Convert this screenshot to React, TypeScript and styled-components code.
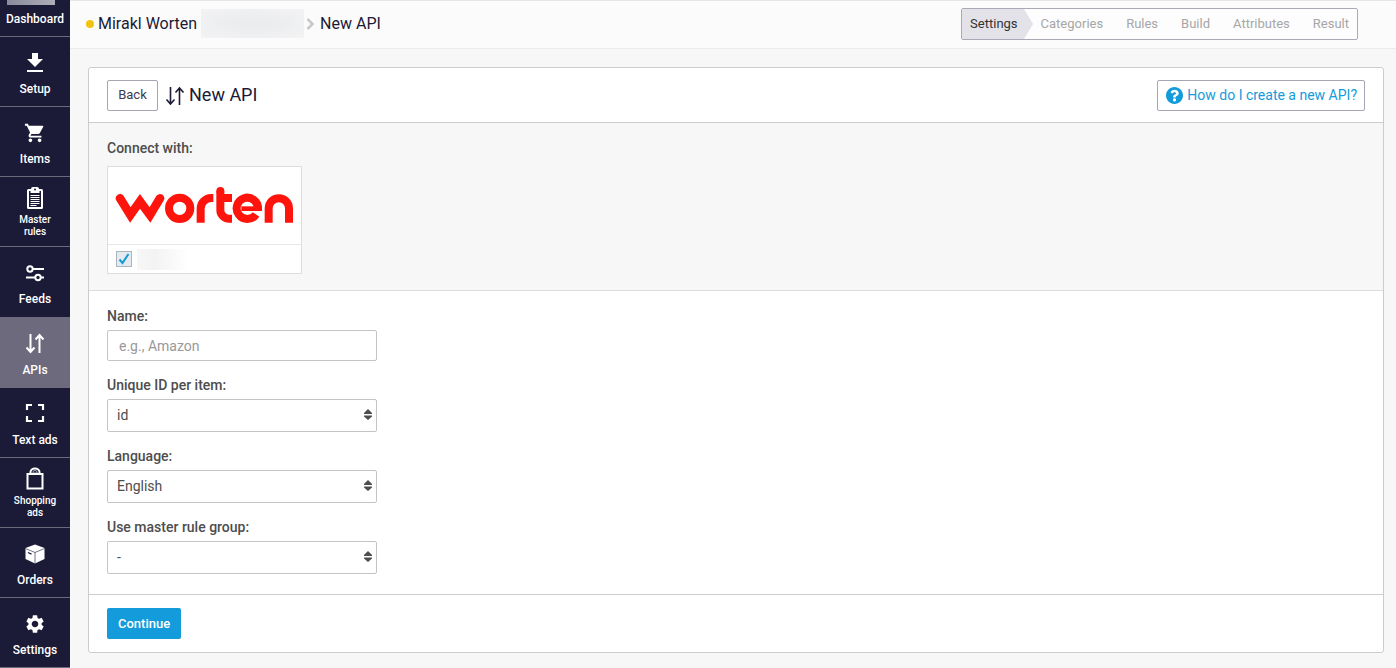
import React from "react";
import styled, { createGlobalStyle, css } from "styled-components";
import { MdShoppingCart, MdSettings } from "react-icons/md";

const GlobalStyle = createGlobalStyle`
  * { box-sizing: border-box; }
  body {
    margin: 0;
    background: #f7f7f7;
    color: #4d4d4d;
    font-family: Roboto, "Liberation Sans", sans-serif;
    font-size: 14px;
  }
  button, input, select { font-family: inherit; }
`;

const navy = "#1b1a37";
const blue = "#139bdb";

const Page = styled.div`
  display: flex;
  align-items: stretch;
  min-height: 100vh;
`;

const Sidebar = styled.nav`
  width: 70px;
  flex: none;
  background: ${navy};
`;

const NavItem = styled.a<{ $active?: boolean; $small?: boolean; $tall?: boolean }>`
  display: flex;
  flex-direction: column;
  align-items: center;
  gap: ${(p) => (p.$small ? 4 : 7)}px;
  height: ${(p) => (p.$tall ? 71 : 70)}px;
  padding-top: ${(p) => (p.$small ? 9 : 15)}px;
  border-bottom: 1px solid #6c6a7c;
  background: ${(p) => (p.$active ? "#6c6a7c" : "transparent")};
  color: #fff;
  font-size: ${(p) => (p.$small ? 10 : 12)}px;
  line-height: ${(p) => (p.$small ? 12 : 16)}px;
  font-weight: 500;
  text-align: center;
  text-decoration: none;
  svg { display: block; }
`;

const NavItemCut = styled(NavItem)`
  height: 37px;
  padding-top: 0;
  gap: 6px;
`;

const DashboardTile = styled.span`
  align-self: flex-start;
  width: 48px;
  height: 5px;
  margin-left: 7px;
  background: linear-gradient(90deg, #8b8a9b, #aeadb8);
`;

const Main = styled.div`
  flex: 1;
  min-width: 0;
`;

const TopBar = styled.header`
  display: flex;
  align-items: center;
  justify-content: space-between;
  height: 49px;
  padding: 0 38px 2px 16px;
  border-top: 1px solid #e6e6e6;
  border-bottom: 1px solid #ebebeb;
  background: #fbfbfb;
`;

const Crumbs = styled.div`
  display: flex;
  align-items: center;
  color: ${navy};
  font-size: 16px;
  line-height: 20px;
`;

const StatusDot = styled.span`
  width: 8px;
  height: 8px;
  margin-right: 4px;
  border-radius: 50%;
  background: #f1c40f;
`;

const Crumb = styled.a`
  color: inherit;
  text-decoration: none;
`;

const HiddenName = styled.span`
  width: 103px;
  height: 29px;
  margin: 0 2px 0 4px;
  background: radial-gradient(ellipse at center, #ebecee 20%, #f3f3f4 100%);
`;

const CrumbArrow = styled.svg`
  margin: 0 5px 0 0;
`;

const Steps = styled.ol`
  display: flex;
  height: 32px;
  margin: 0;
  padding: 0;
  list-style: none;
  border: 1px solid #aaa9b7;
  border-radius: 2px;
  background: #fdfdfd;
  overflow: hidden;
`;

const Step = styled.li<{ $active?: boolean }>`
  position: relative;
  display: flex;
  align-items: center;
  padding: 0 6px 0 17px;
  color: ${(p) => (p.$active ? "#333" : "#a6a6a6")};
  background: ${(p) => (p.$active ? "#e2e2e8" : "#fdfdfd")};
  font-size: 13px;
  &:first-child { padding-left: 8px; }
  &:last-child { padding-right: 8px; }
  &:not(:last-child)::after {
    content: "";
    position: absolute;
    z-index: 1;
    left: 100%;
    top: 0;
    border: solid transparent;
    border-width: 15px 0 15px 9px;
    border-left-color: ${(p) => (p.$active ? "#e2e2e8" : "#fdfdfd")};
  }
`;

const Card = styled.main`
  margin: 18px 12px 15px 18px;
  border: 1px solid #ccc;
  border-radius: 3px;
  background: #fff;
`;

const CardHeader = styled.div`
  display: flex;
  align-items: center;
  justify-content: space-between;
  padding: 12px 18px 11px;
  border-bottom: 1px solid #ccc;
`;

const HeaderLeft = styled.div`
  display: flex;
  align-items: center;
`;

const outline = css`
  height: 31px;
  border: 1px solid #a6a5b4;
  border-radius: 2px;
  background: #fff;
`;

const BackButton = styled.button`
  ${outline}
  width: 51px;
  margin-right: 7px;
  padding: 0 0 2px;
  color: #3b3a52;
  font-size: 13px;
`;

const Title = styled.h1`
  margin: 0 0 0 4px;
  padding-bottom: 2px;
  color: ${navy};
  font-size: 18px;
  line-height: 24px;
  font-weight: 400;
`;

const HelpLink = styled.a`
  ${outline}
  display: flex;
  align-items: center;
  gap: 4px;
  padding: 0 7px 1px 8px;
  color: ${blue};
  font-size: 14px;
  text-decoration: none;
`;

const ConnectSection = styled.section`
  padding: 16px 18px;
  border-bottom: 1px solid #ddd;
  background: #f7f7f7;
`;

const ConnectLabel = styled.h2`
  margin: 0 0 9px;
  font-size: 14px;
  line-height: 18px;
  font-weight: 500;
`;

const ChannelCard = styled.div`
  width: 195px;
  border: 1px solid #ddd;
  background: #fff;
`;

const ChannelLogo = styled.div`
  display: flex;
  align-items: center;
  justify-content: center;
  height: 78px;
  padding-bottom: 2px;
  border-bottom: 1px solid #e8e8e8;
`;

const ChannelOption = styled.label`
  display: flex;
  align-items: center;
  gap: 5px;
  height: 28px;
  padding-left: 8px;
`;

const CheckWrap = styled.span`
  position: relative;
  display: flex;
  svg {
    position: absolute;
    inset: 0;
    pointer-events: none;
  }
`;

const CheckBox = styled.input`
  appearance: none;
  width: 16px;
  height: 16px;
  margin: 0;
  border: 1px solid #a9b5bf;
  background: #e6eaee;
`;

const HiddenChannel = styled.span`
  width: 52px;
  height: 21px;
  background: linear-gradient(90deg, #f7f7f7, #f3f3f3 35%, #fff);
`;

const FormSection = styled.section`
  display: flex;
  flex-direction: column;
  align-items: flex-start;
  gap: 15px;
  padding: 16px 18px 20px;
  border-bottom: 1px solid #ccc;
`;

const Field = styled.div`
  display: flex;
  flex-direction: column;
  gap: 4px;
  width: 270px;
`;

const FieldLabel = styled.label`
  font-size: 14px;
  line-height: 19px;
  font-weight: 500;
`;

const control = css`
  width: 100%;
  border: 1px solid #c4c4c4;
  border-radius: 2px;
  background: #fff;
  color: #4d4d4d;
  font-size: 14px;
`;

const TextInput = styled.input`
  ${control}
  height: 31px;
  padding: 0 11px;
  &::placeholder { color: #999; opacity: 1; }
`;

const SelectWrap = styled.div`
  position: relative;
  svg {
    position: absolute;
    right: 5px;
    top: 10px;
    pointer-events: none;
  }
`;

const SelectBox = styled.select`
  ${control}
  display: block;
  appearance: none;
  height: 33px;
  padding: 0 20px 1px 9px;
`;

const CardFooter = styled.div`
  padding: 13px 18px;
`;

const ContinueButton = styled.button`
  display: block;
  height: 31px;
  padding: 0 11px;
  border: 0;
  border-radius: 2px;
  background: ${blue};
  color: #fff;
  font-size: 13px;
  font-weight: 500;
`;

function DownUpIcon() {
  return (
    <svg width="22" height="22" viewBox="0 0 22 22" fill="none" stroke="currentColor" strokeWidth="2" aria-hidden="true">
      <path d="M6.5 1V19M2.5 14.5L6.5 19L10.5 14.5" />
      <path d="M15.5 20V2M11.5 6.500L15.5 2L19.5 6.500" />
    </svg>
  );
}

function SetupIcon() {
  return (
    <svg width="22" height="22" viewBox="0 0 22 22" fill="currentColor" aria-hidden="true">
      <path d="M8 1h6v6h5l-8 8-8-8h5zM3 18h16v2H3z" />
    </svg>
  );
}

function ClipboardIcon() {
  return (
    <svg width="22" height="24" viewBox="0 0 22 24" aria-hidden="true">
      <rect x="3" y="3" width="16" height="20" rx="1.5" fill="#fff" />
      <rect x="7" y="1" width="8" height="5" rx="2" fill="#fff" />
      <path d="M5 5v16h12V5h-1.500v2h-9V5z" fill={navy} />
      <path d="M6.500 9.500h9M6.500 11.500h9M6.500 13.500h9M6.500 15.500h9M6.500 17.500h9M6.500 19.500h6" stroke="#fff" strokeWidth="1.200" />
      <circle cx="11" cy="3.500" r="1" fill={navy} />
    </svg>
  );
}

function SlidersIcon() {
  return (
    <svg width="22" height="22" viewBox="0 0 22 22" fill="none" stroke="currentColor" strokeWidth="2" aria-hidden="true">
      <circle cx="6" cy="7" r="2.700" />
      <path d="M9 7h11M2 15.500h9M17 15.500h3" />
      <circle cx="14" cy="15.500" r="2.700" />
    </svg>
  );
}

function FrameIcon() {
  return (
    <svg width="22" height="22" viewBox="0 0 22 22" fill="none" stroke="currentColor" strokeWidth="2.200" aria-hidden="true">
      <path d="M3 7V2h5M14 2h5v5M19 13v5h-5M8 18H3v-5" />
    </svg>
  );
}

function BagIcon() {
  return (
    <svg width="22" height="24" viewBox="0 0 22 24" fill="none" stroke="currentColor" aria-hidden="true">
      <path d="M3.500 7h15v14.500h-15z" strokeWidth="2" />
      <path d="M6.500 6.500V5a4.500 3.500 0 0 1 9 0V6.500" strokeWidth="2" />
      <path d="M9 6V5a2 1.500 0 0 1 4 0V6z" strokeWidth="1" opacity=".6" />
    </svg>
  );
}

function BoxIcon() {
  return (
    <svg width="22" height="22" viewBox="0 0 22 22" aria-hidden="true">
      <path d="M11 1.500L20.500 5V16L11 20.500L1.500 16V5z" fill="#fff" />
      <path d="M1.500 5.500L11 9.500L20.500 5.500M11 9.500V20.500" fill="none" stroke={navy} strokeWidth=".6" />
      <path d="M4 9.500l3.500 1.600" stroke={navy} strokeWidth="1.200" />
    </svg>
  );
}

function HelpIcon() {
  return (
    <svg width="17" height="17" viewBox="8 8 496 496" fill="currentColor" aria-hidden="true">
      <path d="M504 256c0 136.997-111.043 248-248 248S8 392.997 8 256C8 119.083 119.043 8 256 8s248 111.083 248 248zM262.655 90c-54.497 0-89.255 22.957-116.549 63.758-3.536 5.286-2.353 12.415 2.715 16.258l34.699 26.310c5.205 3.947 12.621 3.008 16.665-2.122 17.864-22.658 30.113-35.797 57.303-35.797 20.429 0 45.698 13.148 45.698 32.958 0 14.976-12.363 22.667-32.534 33.976C247.128 238.528 216 254.941 216 296v4c0 6.627 5.373 12 12 12h56c6.627 0 12-5.373 12-12v-1.333c0-28.462 83.186-29.647 83.186-106.667 0-58.002-60.165-102-116.531-102zM256 338c-25.365 0-46 20.635-46 46 0 25.364 20.635 46 46 46s46-20.636 46-46c0-25.365-20.635-46-46-46z" />
    </svg>
  );
}

function WortenLogo() {
  return (
    <svg width="179" height="38" viewBox="76 198 537 114" fill="none" stroke="#ff140d" strokeWidth="24" role="img" aria-label="Worten">
      <polyline points="91,235 122,285 151,244 181,285 211,235" strokeLinecap="round" strokeWidth="26" strokeMiterlimit="8" />
      <circle cx="270" cy="265" r="32" />
      <path d="M333 308V266A32 32 0 0 1 365 234H371" />
      <path d="M392 213V270A26 26 0 0 0 418 296H427" />
      <path d="M392 234H427" />
      <circle cx="392" cy="213" r="12" fill="#ff140d" stroke="none" />
      <path d="M499.200 283.400A32 32 0 1 1 505 265V273" />
      <path d="M455 266H517" strokeWidth="14" />
      <path d="M537 308V265A30 30 0 0 1 598 265V308" />
    </svg>
  );
}

type SelectFieldProps = { id: string; label: string; options: string[] };

function SelectField({ id, label, options }: SelectFieldProps) {
  return (
    <Field>
      <FieldLabel htmlFor={id}>{label}</FieldLabel>
      <SelectWrap>
        <SelectBox id={id} defaultValue={options[0]}>
          {options.map((o) => (
            <option key={o}>{o}</option>
          ))}
        </SelectBox>
        <svg width="8" height="11" viewBox="0 0 8 11" fill="#4d4d4d" aria-hidden="true">
          <path d="M4 0L8 4V5H0V4zM0 6.500H8V7.500L4 11L0 7.500z" />
        </svg>
      </SelectWrap>
    </Field>
  );
}

const steps = ["Settings", "Categories", "Rules", "Build", "Attributes", "Result"];

export default function App() {
  return (
    <>
      <GlobalStyle />
      <Page>
        <Sidebar aria-label="Main">
          <NavItemCut href="#dashboard"><DashboardTile />Dashboard</NavItemCut>
          <NavItem href="#setup"><SetupIcon />Setup</NavItem>
          <NavItem href="#items"><MdShoppingCart size={22} />Items</NavItem>
          <NavItem href="#master-rules" $small><ClipboardIcon /><span>Master<br />rules</span></NavItem>
          <NavItem href="#feeds" $tall><SlidersIcon />Feeds</NavItem>
          <NavItem href="#apis" $active aria-current="page"><DownUpIcon />APIs</NavItem>
          <NavItem href="#text-ads"><FrameIcon />Text ads</NavItem>
          <NavItem href="#shopping-ads" $small><BagIcon /><span>Shopping<br />ads</span></NavItem>
          <NavItem href="#orders"><BoxIcon />Orders</NavItem>
          <NavItem href="#settings"><MdSettings size={22} />Settings</NavItem>
        </Sidebar>
        <Main>
          <TopBar>
            <Crumbs>
              <StatusDot />
              <Crumb href="#project">Mirakl Worten</Crumb>
              <HiddenName />
              <CrumbArrow width="9" height="14" viewBox="0 0 9 14" fill="none" stroke="#c8c8c8" strokeWidth="2.500" aria-hidden="true">
                <path d="M1.500 2L6.500 7L1.500 12" />
              </CrumbArrow>
              <span>New API</span>
            </Crumbs>
            <Steps>
              {steps.map((s, i) => (
                <Step key={s} $active={i === 0}>{s}</Step>
              ))}
            </Steps>
          </TopBar>
          <Card>
            <CardHeader>
              <HeaderLeft>
                <BackButton type="button">Back</BackButton>
                <svg width="20" height="20" viewBox="0 0 20 20" fill="none" stroke={navy} strokeWidth="1.600" aria-hidden="true">
                  <path d="M5.500 1V18M1.500 13.500L5.500 18L9.500 13.500" />
                  <path d="M14.500 19V2M10.500 6.500L14.500 2L18.500 6.500" />
                </svg>
                <Title>New API</Title>
              </HeaderLeft>
              <HelpLink href="#help"><HelpIcon />How do I create a new API?</HelpLink>
            </CardHeader>
            <ConnectSection>
              <ConnectLabel>Connect with:</ConnectLabel>
              <ChannelCard>
                <ChannelLogo><WortenLogo /></ChannelLogo>
                <ChannelOption>
                  <CheckWrap>
                    <CheckBox type="checkbox" defaultChecked aria-label="Worten channel" />
                    <svg width="16" height="16" viewBox="0 0 16 16" fill="none" stroke={blue} strokeWidth="2" aria-hidden="true">
                      <path d="M3.500 8.500L6.500 12L12.500 3" />
                    </svg>
                  </CheckWrap>
                  <HiddenChannel />
                </ChannelOption>
              </ChannelCard>
            </ConnectSection>
            <FormSection>
              <Field>
                <FieldLabel htmlFor="name">Name:</FieldLabel>
                <TextInput id="name" type="text" placeholder="e.g., Amazon" />
              </Field>
              <SelectField id="uid" label="Unique ID per item:" options={["id"]} />
              <SelectField id="language" label="Language:" options={["English"]} />
              <SelectField id="group" label="Use master rule group:" options={["-"]} />
            </FormSection>
            <CardFooter>
              <ContinueButton type="button">Continue</ContinueButton>
            </CardFooter>
          </Card>
        </Main>
      </Page>
    </>
  );
}
